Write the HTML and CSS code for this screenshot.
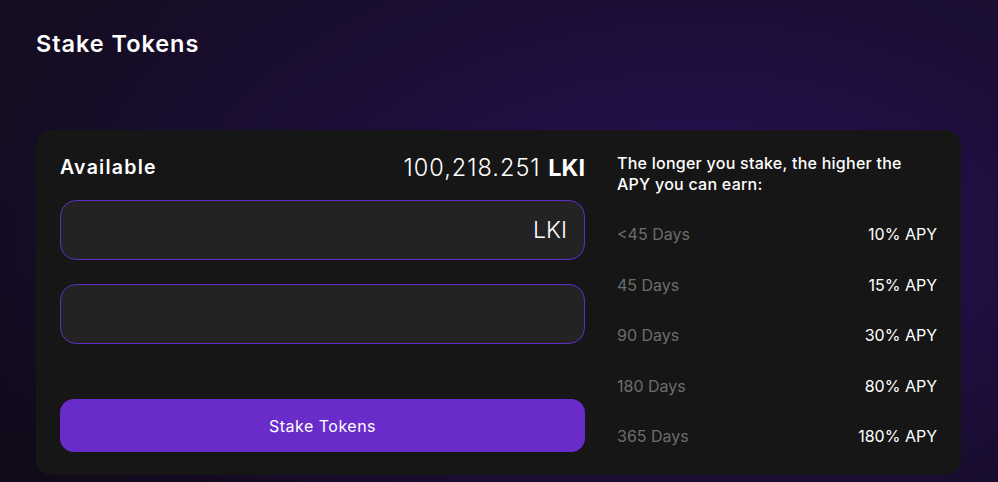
FILE: index.html
```html
<!DOCTYPE html>
<html lang="en">
<head>
<meta charset="utf-8">
<title>Stake Tokens</title>
<link rel="stylesheet" href="styles.css">
</head>
<body>
<main class="page">
  <h1 class="title">Stake Tokens</h1>
  <section class="card">
    <div class="stake-form">
      <div class="balance-row">
        <span class="balance-label">Available</span>
        <span class="balance-value">100,218.251 <b>LKI</b></span>
      </div>
      <div class="field"><span class="field-unit">LKI</span></div>
      <div class="field field-second"></div>
      <button class="stake-btn" type="button">Stake Tokens</button>
    </div>
    <div class="apy-info">
      <p class="apy-intro">The longer you stake, the higher the APY you can earn:</p>
      <ul class="apy-list">
        <li class="apy-row"><span class="apy-days">&lt;45 Days</span><span class="apy-rate">10% APY</span></li>
        <li class="apy-row"><span class="apy-days">45 Days</span><span class="apy-rate">15% APY</span></li>
        <li class="apy-row"><span class="apy-days">90 Days</span><span class="apy-rate">30% APY</span></li>
        <li class="apy-row"><span class="apy-days">180 Days</span><span class="apy-rate">80% APY</span></li>
        <li class="apy-row"><span class="apy-days">365 Days</span><span class="apy-rate">180% APY</span></li>
      </ul>
    </div>
  </section>
</main>
</body>
</html>
```
FILE: styles.css
```css
* { box-sizing: border-box; }
html, body { height: 100%; }
body {
  margin: 0;
  font-family: Inter, "Noto Sans", sans-serif;
  color: #fff;
  background:
    radial-gradient(ellipse 75% 85% at 70% 50%, #2b1158 0%, #1e0e3d 45%, rgba(16,10,24,0) 100%),
    linear-gradient(180deg, #150d22 0%, #110a1b 100%);
  background-color: #120b1d;
  overflow: hidden;
}
.page {
  padding: 27px 37px 0 36px;
}
.title {
  margin: 0;
  font-size: 23.5px;
  font-weight: 600;
  line-height: 33px;
  letter-spacing: 0.95px;
}
.card {
  margin-top: 70px;
  background: #161616;
  border-radius: 16px;
  padding: 22px 24px 23px 24px;
  display: grid;
  grid-template-columns: 1fr 320px;
  column-gap: 32px;
  height: 345px;
}
.stake-form {
  display: flex;
  flex-direction: column;
}
.balance-row {
  display: flex;
  justify-content: space-between;
  align-items: center;
  height: 30px;
}
.balance-label {
  font-size: 19.5px;
  font-weight: 600;
  letter-spacing: 1.25px;
}
.balance-value {
  font-size: 23.5px;
  font-weight: 300;
  letter-spacing: 1px;
}
.balance-value b { font-weight: 700; letter-spacing: 0; }
.field {
  margin-top: 18px;
  height: 60px;
  background: #232325;
  border: 1px solid #5b2fc4;
  border-radius: 16px;
  display: flex;
  align-items: center;
  justify-content: flex-end;
  padding-right: 17px;
}
.field-second { margin-top: 24px; }
.field-unit {
  font-size: 23px;
  font-weight: 300;
}
.stake-btn {
  margin-top: auto;
  height: 53px;
  border: 0;
  border-radius: 14px;
  background: #6a2bcb;
  color: #fff;
  font-family: inherit;
  font-size: 16px;
  font-weight: 400;
  letter-spacing: 0.5px;
}
.apy-info {
  display: flex;
  flex-direction: column;
}
.apy-intro {
  margin: 0;
  font-size: 16px;
  line-height: 21px;
  font-weight: 500;
  letter-spacing: 0.25px;
  padding-top: 1px;
}
.apy-list {
  list-style: none;
  margin: 29px 0 0;
  padding: 0;
  display: flex;
  flex-direction: column;
  gap: 30.6px;
}
.apy-row {
  display: flex;
  justify-content: space-between;
  font-size: 16px;
  line-height: 20px;
}
.apy-days { color: #6d6d6d; }
.apy-rate { color: #fff; }
```
